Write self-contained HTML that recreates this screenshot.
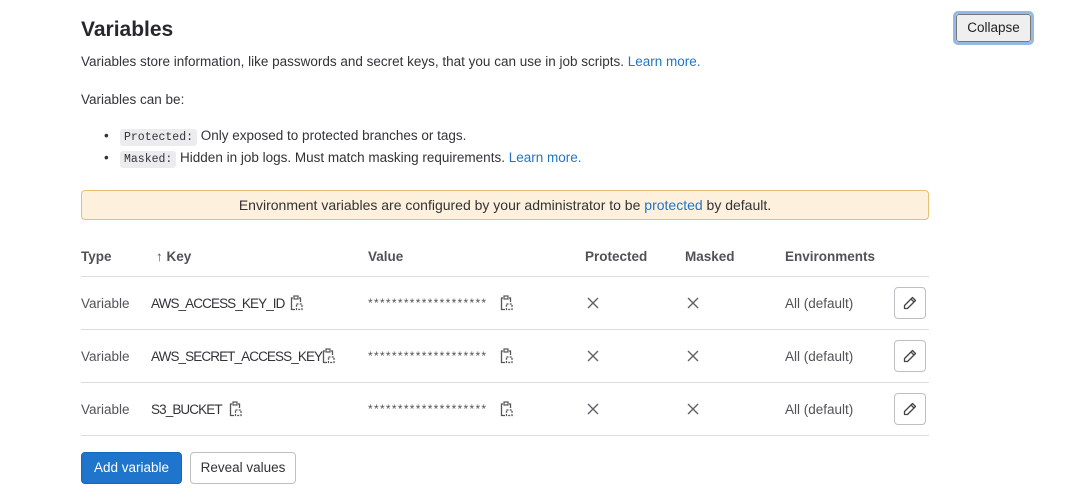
<!DOCTYPE html>
<html><head><style>
*{box-sizing:border-box;margin:0;padding:0}
body{width:1082px;height:500px;background:#fff;font-family:"Liberation Sans",sans-serif;color:#333238;font-size:13.5px;position:relative;overflow:hidden}
.a{position:absolute;white-space:nowrap}
a{color:#1f75cb;text-decoration:none}
code{font-family:"Liberation Mono",monospace;font-size:11.5px;background:#ececef;padding:2px 4px;border-radius:3px}
.th{font-weight:bold;color:#535158}
.line{position:absolute;left:81px;width:848px;height:1px;background:#dcdcde}
.ed{position:absolute;left:894px;width:32px;height:32px;border:1px solid #bfbfc3;border-radius:4px}
.cp{position:absolute}
.k{letter-spacing:-0.9px}
.st{font-size:12px;letter-spacing:1.3px;color:#535158}
</style></head><body>
<div class="a" style="left:81px;top:18px;font-size:21px;font-weight:bold;color:#28272d">Variables</div>
<div class="a" style="left:953px;top:11px;width:81px;height:34px;border:3px solid #94b9e4;border-radius:5px;background:#efefef"><div style="border:1px solid #777;width:100%;height:100%;border-radius:3px;text-align:center;line-height:26px;font-size:13.5px;color:#222">Collapse</div></div>
<div class="a" style="left:81px;top:54px">Variables store information, like passwords and secret keys, that you can use in job scripts. <a>Learn more.</a></div>
<div class="a" style="left:81px;top:92px">Variables can be:</div>
<div class="a" style="left:104px;top:128px">•&nbsp;&nbsp; <code>Protected:</code> Only exposed to protected branches or tags.</div>
<div class="a" style="left:104px;top:150px">•&nbsp;&nbsp; <code>Masked:</code> Hidden in job logs. Must match masking requirements. <a>Learn more.</a></div>
<div class="a" style="left:81px;top:190px;width:848px;height:30px;background:#fdf1dd;border:1px solid #e9be74;border-radius:4px;text-align:center;line-height:28px;color:#333;font-size:14px">Environment variables are configured by your administrator to be <a>protected</a> by default.</div>
<div class="a th" style="left:81px;top:249px">Type</div>
<div class="a th" style="left:156px;top:249px">↑ Key</div>
<div class="a th" style="left:368px;top:249px">Value</div>
<div class="a th" style="left:585px;top:249px">Protected</div>
<div class="a th" style="left:685px;top:249px">Masked</div>
<div class="a th" style="left:785px;top:249px">Environments</div>
<div class="line" style="top:276px"></div>
<div class="line" style="top:329px"></div>
<div class="line" style="top:382px"></div>
<div class="line" style="top:435px"></div>

<div class="a" style="left:81px;top:296px;color:#535158">Variable</div>
<div class="a k" style="left:151px;top:296px">AWS_ACCESS_KEY_ID</div>
<div class="a" style="left:81px;top:349px;color:#535158">Variable</div>
<div class="a k" style="left:151px;top:349px">AWS_SECRET_ACCESS_KEY</div>
<div class="a" style="left:81px;top:402px;color:#535158">Variable</div>
<div class="a k" style="left:151px;top:402px">S3_BUCKET</div>

<div class="a st" style="left:368px;top:296px">********************</div>
<div class="a st" style="left:368px;top:349px">********************</div>
<div class="a st" style="left:368px;top:402px">********************</div>

<svg class="cp" style="left:290px;top:295px" width="13" height="16" viewBox="0 0 13 16"><path d="M3 3H1.5v11.5H5M9 3h1.5v4" fill="none" stroke="#555" stroke-width="1.3"/><rect x="4" y="1" width="4" height="3" fill="none" stroke="#555" stroke-width="1.2"/><rect x="6.5" y="9" width="5.5" height="5.5" fill="none" stroke="#555" stroke-width="1.3" stroke-dasharray="2 1.2"/></svg>
<svg class="cp" style="left:322px;top:348px" width="13" height="16" viewBox="0 0 13 16"><path d="M3 3H1.5v11.5H5M9 3h1.5v4" fill="none" stroke="#555" stroke-width="1.3"/><rect x="4" y="1" width="4" height="3" fill="none" stroke="#555" stroke-width="1.2"/><rect x="6.5" y="9" width="5.5" height="5.5" fill="none" stroke="#555" stroke-width="1.3" stroke-dasharray="2 1.2"/></svg>
<svg class="cp" style="left:229px;top:401px" width="13" height="16" viewBox="0 0 13 16"><path d="M3 3H1.5v11.5H5M9 3h1.5v4" fill="none" stroke="#555" stroke-width="1.3"/><rect x="4" y="1" width="4" height="3" fill="none" stroke="#555" stroke-width="1.2"/><rect x="6.5" y="9" width="5.5" height="5.5" fill="none" stroke="#555" stroke-width="1.3" stroke-dasharray="2 1.2"/></svg>
<svg class="cp" style="left:500px;top:295px" width="13" height="16" viewBox="0 0 13 16"><path d="M3 3H1.5v11.5H5M9 3h1.5v4" fill="none" stroke="#555" stroke-width="1.3"/><rect x="4" y="1" width="4" height="3" fill="none" stroke="#555" stroke-width="1.2"/><rect x="6.5" y="9" width="5.5" height="5.5" fill="none" stroke="#555" stroke-width="1.3" stroke-dasharray="2 1.2"/></svg>
<svg class="cp" style="left:500px;top:348px" width="13" height="16" viewBox="0 0 13 16"><path d="M3 3H1.5v11.5H5M9 3h1.5v4" fill="none" stroke="#555" stroke-width="1.3"/><rect x="4" y="1" width="4" height="3" fill="none" stroke="#555" stroke-width="1.2"/><rect x="6.5" y="9" width="5.5" height="5.5" fill="none" stroke="#555" stroke-width="1.3" stroke-dasharray="2 1.2"/></svg>
<svg class="cp" style="left:500px;top:401px" width="13" height="16" viewBox="0 0 13 16"><path d="M3 3H1.5v11.5H5M9 3h1.5v4" fill="none" stroke="#555" stroke-width="1.3"/><rect x="4" y="1" width="4" height="3" fill="none" stroke="#555" stroke-width="1.2"/><rect x="6.5" y="9" width="5.5" height="5.5" fill="none" stroke="#555" stroke-width="1.3" stroke-dasharray="2 1.2"/></svg>

<svg class="cp" style="left:587px;top:297px" width="12" height="12"><path d="M1 1L11 11M11 1L1 11" stroke="#626168" stroke-width="1.4"/></svg>
<svg class="cp" style="left:687px;top:297px" width="12" height="12"><path d="M1 1L11 11M11 1L1 11" stroke="#626168" stroke-width="1.4"/></svg>
<svg class="cp" style="left:587px;top:350px" width="12" height="12"><path d="M1 1L11 11M11 1L1 11" stroke="#626168" stroke-width="1.4"/></svg>
<svg class="cp" style="left:687px;top:350px" width="12" height="12"><path d="M1 1L11 11M11 1L1 11" stroke="#626168" stroke-width="1.4"/></svg>
<svg class="cp" style="left:587px;top:403px" width="12" height="12"><path d="M1 1L11 11M11 1L1 11" stroke="#626168" stroke-width="1.4"/></svg>
<svg class="cp" style="left:687px;top:403px" width="12" height="12"><path d="M1 1L11 11M11 1L1 11" stroke="#626168" stroke-width="1.4"/></svg>

<div class="a" style="left:785px;top:296px;color:#535158">All (default)</div>
<div class="a" style="left:785px;top:349px;color:#535158">All (default)</div>
<div class="a" style="left:785px;top:402px;color:#535158">All (default)</div>

<div class="ed" style="top:287px"><svg style="position:absolute;left:8px;top:8px" width="14" height="14" viewBox="0 0 14 14"><path d="M9.5 1.5l3 3-8 8H1.5v-3z M8 3l3 3" fill="none" stroke="#444" stroke-width="1.3" stroke-linejoin="round"/></svg></div>
<div class="ed" style="top:340px"><svg style="position:absolute;left:8px;top:8px" width="14" height="14" viewBox="0 0 14 14"><path d="M9.5 1.5l3 3-8 8H1.5v-3z M8 3l3 3" fill="none" stroke="#444" stroke-width="1.3" stroke-linejoin="round"/></svg></div>
<div class="ed" style="top:393px"><svg style="position:absolute;left:8px;top:8px" width="14" height="14" viewBox="0 0 14 14"><path d="M9.5 1.5l3 3-8 8H1.5v-3z M8 3l3 3" fill="none" stroke="#444" stroke-width="1.3" stroke-linejoin="round"/></svg></div>

<div class="a" style="left:81px;top:452px;width:101px;height:32px;background:#1f75cb;border:1px solid #1068bf;border-radius:4px;color:#fff;text-align:center;line-height:30px">Add variable</div>
<div class="a" style="left:190px;top:452px;width:106px;height:32px;border:1px solid #bfbfc3;border-radius:4px;text-align:center;line-height:30px">Reveal values</div>
</body></html>
